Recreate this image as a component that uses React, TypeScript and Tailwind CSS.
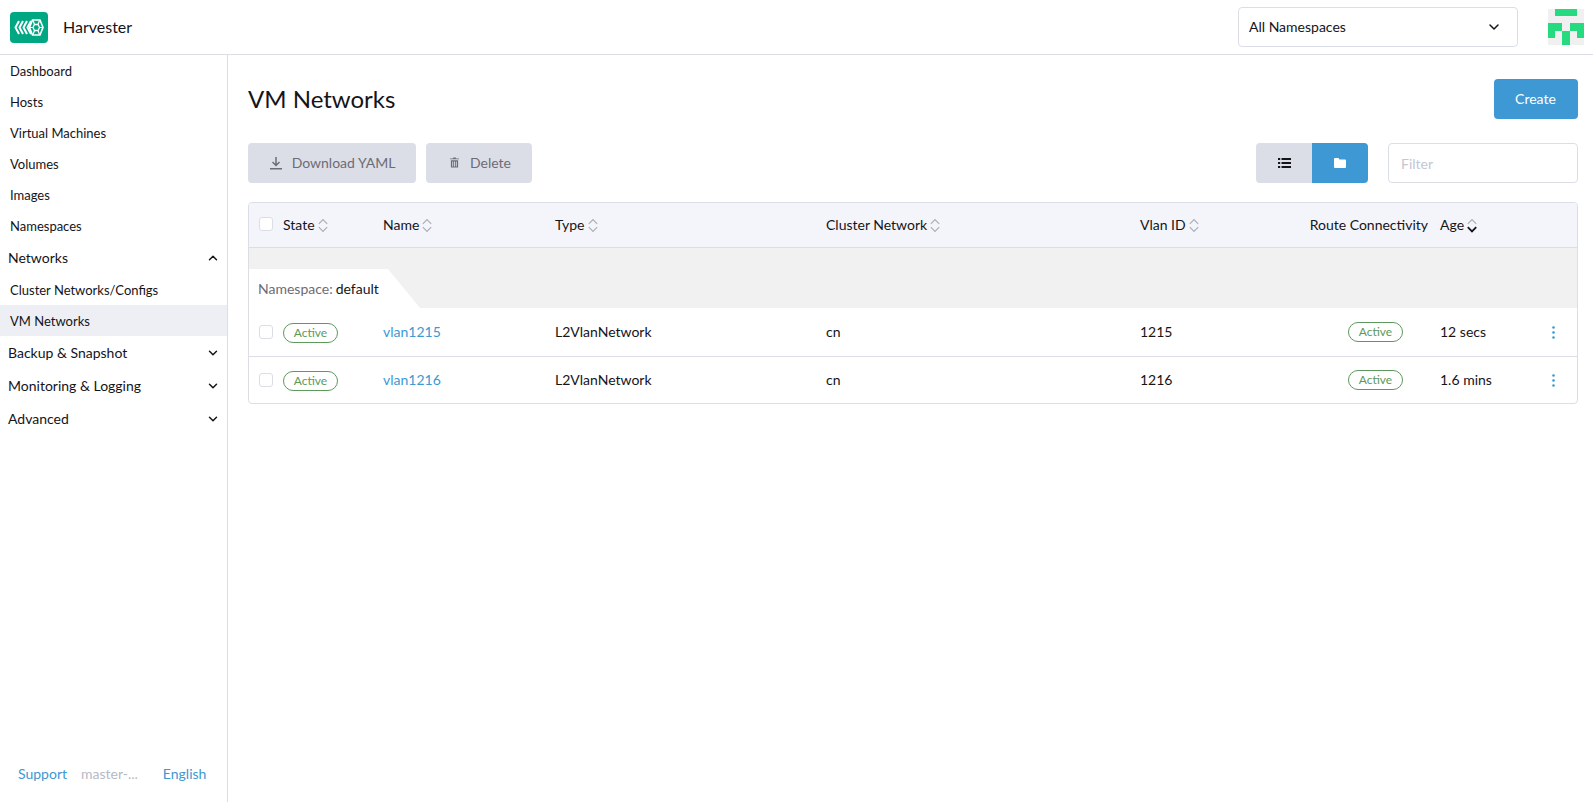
import { ChevronDown, ChevronUp } from 'lucide-react';

const topLinks = ['Dashboard', 'Hosts', 'Virtual Machines', 'Volumes', 'Images', 'Namespaces'];

const gridCols = 'grid grid-cols-[34px_100px_172px_271px_314px_160px_128px_12px_1fr]';

const rows = [
  { name: 'vlan1215', vlan: '1215', age: '12 secs', height: 'h-[49px] border-b border-[#dcdee7]' },
  { name: 'vlan1216', vlan: '1216', age: '1.6 mins', height: 'h-[46px]' },
];

function Logo() {
  return (
    <svg width="38" height="31" viewBox="0 0 38 31" className="block">
      <rect width="38" height="31" rx="4" fill="#00a783" />
      <g fill="none" stroke="#fff" strokeWidth="2">
        <path d="M9 9 5.500 15.500l3.500 6.500" />
        <path d="M13 9 9.500 15.500l3.500 6.500" />
        <path d="M17 9 13.500 15.500l3.500 6.500" />
        <path d="M21 9 17.500 15.500l3.500 6.500" />
        <path d="M22.500 8h7.500l3 7.500-3 7.500h-7.500l-3-7.500z" strokeWidth="1.600" />
        <path d="M24.500 12.500h3.500l1.500 3-1.500 3h-3.500l-1.500-3z" strokeWidth="1.300" />
        <path d="M23 8.500l1.500 4M29.500 8.500 28 12.500M23 22.500l1.500-4M29.500 22.500 28 18.500M20 15.500h3M29.500 15.500h3" strokeWidth="1.200" />
      </g>
    </svg>
  );
}

function Avatar() {
  const cells = [
    [1, 0], [2, 0], [3, 0],
    [0, 2], [1, 2], [3, 2], [4, 2],
    [0, 3], [2, 3], [4, 3],
    [2, 4],
  ];
  return (
    <svg width="36" height="36" viewBox="0 0 5 5" className="block" shapeRendering="crispEdges">
      <rect width="5" height="5" fill="#f0f0f0" />
      {cells.map(([x, y]) => (
        <rect key={`${x}-${y}`} x={x} y={y} width="1" height="1" fill="#25da7f" />
      ))}
    </svg>
  );
}

function SortIcon({ active = false }: { active?: boolean }) {
  return (
    <svg width="10" height="15" viewBox="0 0 10 15" className="ml-[3px] shrink-0">
      <path d="M.8 5.800 5 1.500 9.200 5.800" fill="none" stroke="#a9acb8" strokeWidth="1.100" />
      <path
        d="M.8 9.200 5 13.500 9.200 9.200"
        fill="none"
        stroke={active ? '#141419' : '#a9acb8'}
        strokeWidth={active ? 1.800 : 1.100}
      />
    </svg>
  );
}

function Badge() {
  return (
    <span className="inline-flex h-5 w-[55px] items-center justify-center rounded-[10px] border border-[#5d995d] text-xs leading-none text-[#5d995d]">
      Active
    </span>
  );
}

function Checkbox() {
  return <span className="block h-[14px] w-[14px] rounded-[3px] border border-[#dcdee7] bg-white" />;
}

function Header({ label, sort = true, active = false }: { label: string; sort?: boolean; active?: boolean }) {
  return (
    <div className="flex items-center text-sm text-[#141419]">
      <span>{label}</span>
      {sort && <SortIcon active={active} />}
    </div>
  );
}

export default function App() {
  return (
    <div className="flex h-[802px] w-[1593px] flex-col overflow-hidden bg-white font-['Lato','Liberation_Sans',sans-serif] text-sm text-[#141419]">
      <header className="flex h-[55px] shrink-0 items-center border-b border-[#dcdee7] pl-[10px]">
        <Logo />
        <span className="ml-[15px] text-[16px]">Harvester</span>
        <div className="ml-auto flex h-[40px] w-[280px] items-center justify-between rounded border border-[#dcdee7] pl-[10px] pr-[15px]">
          <span>All Namespaces</span>
          <ChevronDown size={16} strokeWidth={2.200} className="text-[#141419]" />
        </div>
        <div className="ml-[30px] mr-[9px]">
          <Avatar />
        </div>
      </header>

      <div className="flex min-h-0 flex-1">
        <aside className="flex w-[228px] shrink-0 flex-col border-r border-[#dcdee7]">
          {topLinks.map((l) => (
            <div key={l} className="flex h-[31px] items-center pl-[10px] pt-[2px] text-[13px]">
              {l}
            </div>
          ))}
          <div className="flex h-[33px] items-center justify-between pl-[8px] pr-[7px]">
            <span>Networks</span>
            <ChevronUp size={14} strokeWidth={2.500} />
          </div>
          <div className="flex h-[31px] items-center pl-[10px] pt-[2px] text-[13px]">Cluster Networks/Configs</div>
          <div className="flex h-[31px] items-center bg-[#eeeff4] pl-[10px] pt-[2px] text-[13px]">VM Networks</div>
          {['Backup & Snapshot', 'Monitoring & Logging', 'Advanced'].map((g) => (
            <div key={g} className="flex h-[33px] items-center justify-between pl-[8px] pr-[7px]">
              <span>{g}</span>
              <ChevronDown size={14} strokeWidth={2.500} />
            </div>
          ))}
          <div className="mt-auto mb-[18px] flex items-center pl-[18px] text-sm">
            <span className="text-[#3d98d3]">Support</span>
            <span className="ml-[14px] text-[#b6b9c4]">master-...</span>
            <span className="ml-[25px] text-[#3d98d3]">English</span>
          </div>
        </aside>

        <main className="min-w-0 flex-1 pl-[20px] pr-[15px] pt-[24px]">
          <div className="flex items-center justify-between">
            <h1 className="text-2xl font-normal">VM Networks</h1>
            <button className="h-[40px] w-[84px] rounded bg-[#3d98d3] pr-px text-sm text-white">Create</button>
          </div>

          <div className="mt-[24px] flex items-center">
            <button className="flex h-[40px] w-[168px] items-center justify-center rounded bg-[#dcdee7] text-sm text-[#6c6c76]">
              <svg width="14" height="14" viewBox="0 0 14 14" className="mr-[9px]" fill="none" stroke="#6c6c76" strokeWidth="1.500">
                <path d="M7 1v8.500M3.500 6 7 9.500 10.500 6M1 12.800h12" />
              </svg>
              Download YAML
            </button>
            <button className="ml-[10px] flex h-[40px] w-[106px] items-center rounded bg-[#dcdee7] pl-[24px] text-sm text-[#6c6c76]">
              <svg width="9" height="11" viewBox="0 0 10 11" className="mr-[11px] mb-[2px]" fill="#6c6c76">
                <path d="M3.500 0h3v1H10v1H0V1h3.500zM1 3h8v8H1zm1.500 1.500V10h1V4.500zm2 0V10h1V4.500zm2 0V10h1V4.500z" fillRule="evenodd" />
              </svg>
              Delete
            </button>
            <div className="ml-auto flex overflow-hidden rounded">
              <div className="flex h-[40px] w-[56px] items-center justify-center bg-[#dcdee7]">
                <svg width="13" height="10" viewBox="0 0 13 10" fill="#141419">
                  <path d="M0 0h2.200v2H0zM3.500 0H13v2H3.500zM0 4h2.200v2H0zM3.500 4H13v2H3.500zM0 8h2.200v2H0zM3.500 8H13v2H3.500z" />
                </svg>
              </div>
              <div className="flex h-[40px] w-[56px] items-center justify-center bg-[#3d98d3]">
                <svg width="12" height="10" viewBox="0 0 12 10" fill="#fff">
                  <path d="M1 0h3.500l1 1.500H11a1 1 0 0 1 1 1V9a1 1 0 0 1-1 1H1a1 1 0 0 1-1-1V1a1 1 0 0 1 1-1z" />
                </svg>
              </div>
            </div>
            <div className="ml-[20px] flex h-[40px] w-[190px] items-center rounded border border-[#dcdee7] pl-[12px] pt-px text-sm text-[#c5c7d2]">
              Filter
            </div>
          </div>

          <div className="mt-[19px] overflow-hidden rounded border border-[#dcdee7]">
            <div className={`${gridCols} h-[45px] items-center border-b border-[#dcdee7] bg-[#f4f5fa]`}>
              <div className="-mt-[3px] pl-[10px]">
                <Checkbox />
              </div>
              <Header label="State" />
              <Header label="Name" />
              <Header label="Type" />
              <Header label="Cluster Network" />
              <Header label="Vlan ID" />
              <div className="whitespace-nowrap text-right text-sm">Route Connectivity</div>
              <div />
              <Header label="Age" active />
            </div>

            <div className="h-[60px] bg-[#f1f1f1] pt-[21px]">
              <div className="flex h-[39px] w-[171px] items-center bg-white pl-[9px] [clip-path:polygon(0_0,139px_0,100%_100%,0_100%)]">
                <span className="text-[#6c6c76]">Namespace:</span>
                <span className="ml-[3px]">default</span>
              </div>
            </div>

            {rows.map((r) => (
              <div key={r.name} className={`${gridCols} ${r.height} items-center`}>
                <div className="pl-[10px]">
                  <Checkbox />
                </div>
                <div>
                  <Badge />
                </div>
                <div className="text-[#3d98d3]">{r.name}</div>
                <div>L2VlanNetwork</div>
                <div>cn</div>
                <div>{r.vlan}</div>
                <div className="flex justify-end pr-[25px]">
                  <Badge />
                </div>
                <div />
                <div className="flex items-center justify-between pr-[22px]">
                  <span>{r.age}</span>
                  <svg width="3" height="13" viewBox="0 0 3 13" fill="#3d98d3">
                    <circle cx="1.500" cy="1.500" r="1.300" />
                    <circle cx="1.500" cy="6.500" r="1.300" />
                    <circle cx="1.500" cy="11.500" r="1.300" />
                  </svg>
                </div>
              </div>
            ))}
          </div>
        </main>
      </div>
    </div>
  );
}
